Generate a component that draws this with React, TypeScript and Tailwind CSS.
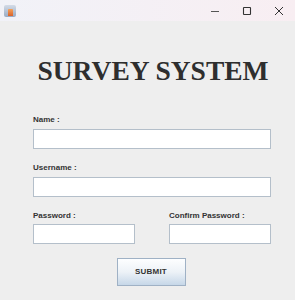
export default function App() {
  return (
    <div className="w-[295px] h-[300px] bg-[#eeeeee] flex flex-col overflow-hidden" style={{ fontFamily: '"Liberation Sans", Arial, sans-serif' }}>
      {/* Title bar */}
      <div className="h-[21px] shrink-0 flex items-center bg-gradient-to-r from-[#f1f2f8] to-[#f8eef2]">
        <div className="ml-[4px] w-[12px] h-[12px] rounded-[2px] bg-gradient-to-b from-[#d3dbe7] to-[#9aabc3] flex items-end justify-center">
          <div className="w-[5px] h-[7px] bg-gradient-to-b from-[#f5a25a] to-[#d9622b] rounded-t-[1px] mb-[1px]" />
        </div>
        <div className="flex-1" />
        <svg width="10" height="10" viewBox="0 0 10 10" className="mr-[22px]">
          <path d="M1 5.5h8" stroke="#555" strokeWidth="1" />
        </svg>
        <svg width="10" height="10" viewBox="0 0 10 10" className="mr-[22px]">
          <rect x="1.5" y="1.5" width="7" height="7" fill="none" stroke="#333" strokeWidth="1.1" rx="0.5" />
        </svg>
        <svg width="10" height="10" viewBox="0 0 10 10" className="mr-[11px]">
          <path d="M1 1l8 8M9 1l-8 8" stroke="#333" strokeWidth="1" />
        </svg>
      </div>

      <div className="flex flex-col px-[33px] pr-[24px]">
        <h1 className="mt-[35px] text-center text-[27.5px] leading-[30px] font-bold text-[#2e2e2e] pl-[2px]" style={{ fontFamily: '"Liberation Serif", "Times New Roman", serif' }}>
          SURVEY SYSTEM
        </h1>

        <label className="mt-[29px] text-[8px] leading-[10px] font-bold text-[#333333]">Name :</label>
        <div className="mt-[4px] w-[238px] h-[20px] bg-white border border-[#b4bfca]" />

        <label className="mt-[14px] text-[8px] leading-[10px] font-bold text-[#333333]">Username :</label>
        <div className="mt-[4px] w-[238px] h-[20px] bg-white border border-[#b4bfca]" />

        <div className="mt-[14px] flex gap-[34px]">
          <div className="flex flex-col">
            <label className="text-[8px] leading-[10px] font-bold text-[#333333]">Password :</label>
            <div className="mt-[3px] w-[102px] h-[20px] bg-white border border-[#b4bfca]" />
          </div>
          <div className="flex flex-col">
            <label className="text-[8px] leading-[10px] font-bold text-[#333333]">Confirm Password :</label>
            <div className="mt-[3px] w-[102px] h-[20px] bg-white border border-[#b4bfca]" />
          </div>
        </div>

        <div className="mt-[14px] flex justify-center">
          <button className="ml-[-2px] w-[69px] h-[28px] border border-[#9fb1c5] bg-gradient-to-b from-[#fdfeff] via-[#edf2f7] to-[#c6d7e8] text-[8px] font-bold text-[#333333] tracking-[0.2px]">
            SUBMIT
          </button>
        </div>
      </div>
    </div>
  );
}
